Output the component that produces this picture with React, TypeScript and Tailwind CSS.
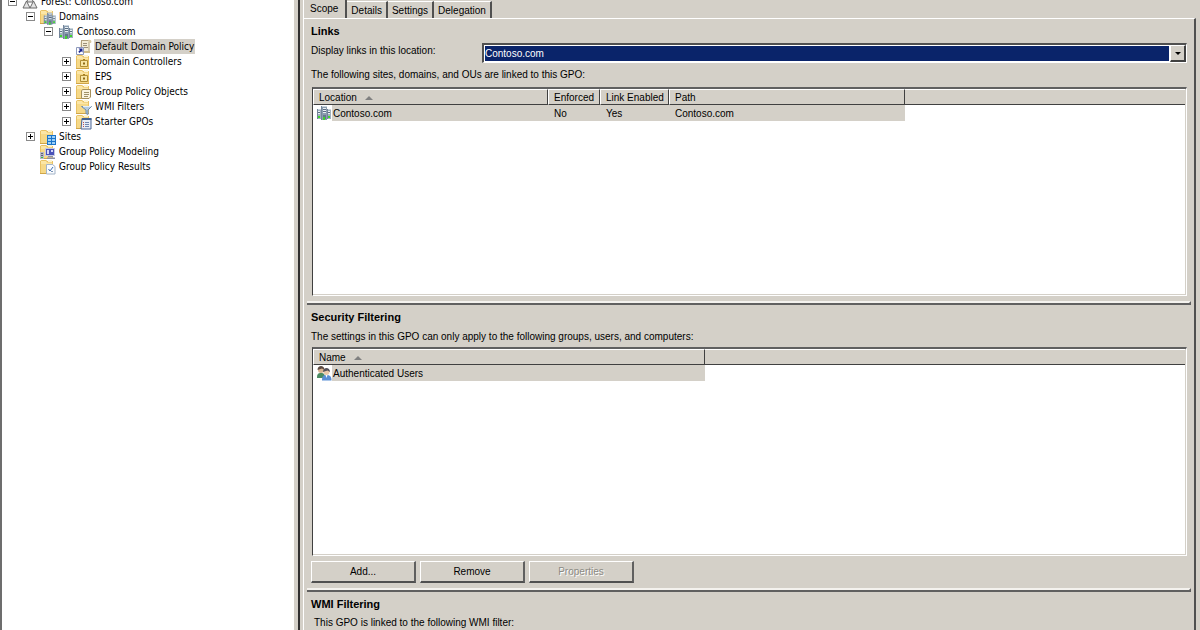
import { useState } from "react";
import type { ReactNode } from "react";
import clsx from "clsx";

type IconName =
  | "forest"
  | "domains"
  | "domain"
  | "link"
  | "ou"
  | "objects"
  | "wmi"
  | "starter"
  | "sites"
  | "modeling"
  | "results";

type Node = {
  label: string;
  icon: IconName;
  level: number;
  toggle?: "open" | "closed";
};

const nodes: Node[] = [
  { label: "Forest: Contoso.com", icon: "forest", level: 0, toggle: "open" },
  { label: "Domains", icon: "domains", level: 1, toggle: "open" },
  { label: "Contoso.com", icon: "domain", level: 2, toggle: "open" },
  { label: "Default Domain Policy", icon: "link", level: 3 },
  { label: "Domain Controllers", icon: "ou", level: 3, toggle: "closed" },
  { label: "EPS", icon: "ou", level: 3, toggle: "closed" },
  { label: "Group Policy Objects", icon: "objects", level: 3, toggle: "closed" },
  { label: "WMI Filters", icon: "wmi", level: 3, toggle: "closed" },
  { label: "Starter GPOs", icon: "starter", level: 3, toggle: "closed" },
  { label: "Sites", icon: "sites", level: 1, toggle: "closed" },
  { label: "Group Policy Modeling", icon: "modeling", level: 1 },
  { label: "Group Policy Results", icon: "results", level: 1 },
];

const indents = ["pl-[6px]", "pl-[24px]", "pl-[42px]", "pl-[60px]"];

const tabs = ["Scope", "Details", "Settings", "Delegation"];

// three server towers with a green light at the foot of each
function Towers() {
  return (
    <g>
      <path d="M5 1h6v14H5z" fill="#8b9db0" />
      <path d="M1 4h4v10H1zM11 4h4v10h-4z" fill="#9fb0be" />
      <path d="M5 1h1v14H5zM1 4h1v10H1zM11 4h1v10h-1z" fill="#74859a" />
      <path d="M6 1h5v1H6zM2 4h3v1H2zM12 4h3v1h-3z" fill="#c9d5de" />
      <path d="M7 3h3v1H7zM7 5h3v1H7zM7 7h3v1H7zM2 6h2v1H2zM2 8h2v1H2zM12 6h2v1h-2zM12 8h2v1h-2z" fill="#e9f0f4" />
      <path d="M7 4h3v1H7zM7 6h3v1H7zM2 7h2v1H2zM12 7h2v1h-2z" fill="#5a6d83" />
      <path d="M7 10h3v4H7z" fill="#64788c" />
      <path d="M2 11h2v2H2zM7 12h2v3H7zM12 11h2v2h-2z" fill="#3fd62c" />
    </g>
  );
}

function Folder() {
  return (
    <g>
      <path d="M0 2 1.500 1H6l1.500 1H13v13H0z" fill="#e9c264" />
      <path d="M1 2h5l1 1.500h5V14H1z" fill="#fbe6a6" />
      <path d="M1 5h11v9H1z" fill="#f6d988" />
      <path d="M0 14h13v1H0z" fill="#cfa548" />
      <path d="M8 1h4v2H8z" fill="#fdf3cf" />
    </g>
  );
}

const icons: Record<IconName, ReactNode> = {
  forest: (
    <g fill="#e4e4e4" stroke="#6b6b6b">
      <path d="M8 1.500 11.500 8h-7z" />
      <path d="M4.500 7 8 14H1zM11.500 7 15 14H8z" />
    </g>
  ),
  domains: (
    <g>
      <Folder />
      <g transform="translate(3 3) scale(.85)">
        <Towers />
      </g>
    </g>
  ),
  domain: <Towers />,
  link: (
    <g>
      <path d="M5 2h8.500v10.500L12 14H4V4z" fill="#f4ecd6" />
      <path d="M5 1h8.500v1H5zM5 2h1v11H5zM12.500 3h1v9h-1z" fill="#b09f7c" />
      <path d="M12 1c3-1 4 1 3 3h-2z" fill="#d8c9a2" />
      <path d="M7 4h4v1H7zM7 6h4v1H7zM8 8h4v1H8z" fill="#9c9079" />
      <path d="M8 12h6v2H8z" fill="#cdbb8c" />
      <path d="M.5 8.500h7v7h-7z" fill="#fff" stroke="#8d99bb" />
      <path d="M2.500 9.500h4v4l-1.300-1.300L3.500 14l-1.200-1.200L4 11z" fill="#18238e" />
    </g>
  ),
  ou: (
    <g>
      <Folder />
      <path d="M4.500 6.500h7v6h-7z" fill="#f9e7a6" stroke="#b08d34" />
      <path d="M7 8.500h2v2H7z" fill="#8f6b17" />
      <path d="M7 5h2v1H7z" fill="#a67f20" />
    </g>
  ),
  objects: (
    <g>
      <Folder />
      <path d="M6.500 5.500h8V13L13 14.500H5.500V7z" fill="#faf4e0" stroke="#a5905c" />
      <path d="M8 8h5v1H8zM8 10h5v1H8zM8 12h4v1H8z" fill="#a09168" />
    </g>
  ),
  wmi: (
    <g>
      <Folder />
      <path d="M5.500 7.500h10L12 11v4.500l-2-1V11z" fill="#b4cbe0" stroke="#6f8eae" />
      <path d="M7 7h8v1H7z" fill="#e2eef8" />
    </g>
  ),
  starter: (
    <g>
      <Folder />
      <path d="M6 4.500h9v10.500H5z" fill="#e7edf6" stroke="#4c6796" />
      <path d="M6 4h9.500v2H6z" fill="#44628f" />
      <path d="M7 8h1v1H7zM7 10h1v1H7zM7 12h1v1H7z" fill="#c65145" />
      <path d="M9 8h4v1H9zM9 10h4v1H9zM9 12h4v1H9z" fill="#6f88b1" />
    </g>
  ),
  sites: (
    <g>
      <Folder />
      <path d="M7 6h9v10H7z" fill="#1b74c9" />
      <path d="M8 7h3v2H8zM12 7h3v2h-3zM8 10h3v2H8zM12 10h3v2h-3zM8 13h3v2H8zM12 13h3v2h-3z" fill="#9dd0f6" />
    </g>
  ),
  modeling: (
    <g>
      <Folder />
      <path d="M5 4h10v8H5z" fill="#c7cbe2" />
      <path d="M6 5h8v6H6z" fill="#4a52b8" />
      <path d="M7 6h2v4H7zM11 6h2v2h-2z" fill="#d4d7f8" />
      <path d="M8 12h5v1H8zM7 13.500h8V15H7z" fill="#8d90a6" />
      <path d="M0 8h4v7H0z" fill="#b5b8c8" />
      <path d="M1 9h2v1H1zM1 11h2v1H1z" fill="#5f6378" />
      <path d="M1 13h2v1H1z" fill="#3cba38" />
    </g>
  ),
  results: (
    <g>
      <Folder />
      <path d="M6.500 5.500h6l2.500 2v7.500H6.500z" fill="#fafcff" stroke="#a3b4c8" />
      <path d="m8.500 10 1.500 2 3-4" fill="none" stroke="#3c6fb2" />
      <path d="M11 12h2v1h-2z" fill="#7a94b6" />
    </g>
  ),
};

function Icon({ name }: { name: IconName }) {
  return (
    <svg className="size-4 shrink-0" viewBox="0 0 16 16" aria-hidden="true">
      {icons[name]}
    </svg>
  );
}

function Toggle({ state }: { state: "open" | "closed" }) {
  return (
    <svg className="size-[9px]" viewBox="0 0 9 9" aria-hidden="true" shapeRendering="crispEdges">
      <path d="M0 0h9v9H0z" fill="#8a8a8a" />
      <path d="M1 1h7v7H1z" fill="#fff" />
      <path d="M2 4h5v1H2z" fill="#000" />
      {state === "closed" && <path d="M4 2h1v5H4z" fill="#000" />}
    </svg>
  );
}

function Tree() {
  const [selected, setSelected] = useState("Default Domain Policy");

  return (
    <nav className="w-[294px] shrink-0 overflow-hidden border-l-2 border-[#6d6d6d] bg-white font-['DejaVu_Sans_Condensed',sans-serif] text-[10px]">
      {/* scrolled down a little, so the forest row is partly out of view */}
      <ul className="-mt-[6px]">
        {nodes.map((node) => (
          <li key={node.label} className={clsx("flex h-[15px] items-center", indents[node.level])}>
            <span className="w-[14px] shrink-0">
              {node.toggle && (
                <button className="block" aria-label={node.label}>
                  <Toggle state={node.toggle} />
                </button>
              )}
            </span>
            <Icon name={node.icon} />
            <button
              onClick={() => setSelected(node.label)}
              className={clsx(
                "ml-[2px] px-px leading-[15px] whitespace-nowrap",
                selected === node.label && "bg-[#d4d0c8]"
              )}
            >
              {node.label}
            </button>
          </li>
        ))}
      </ul>
    </nav>
  );
}

function SortArrow() {
  return (
    <svg className="ml-2 inline-block h-1 w-2" viewBox="0 0 8 4" aria-hidden="true">
      <path d="M4 0 8 4H0z" fill="#808080" />
    </svg>
  );
}

function Head({ children }: { children?: ReactNode }) {
  return (
    <th
      className={clsx(
        "h-4 border-t border-b border-t-white border-b-[#404040] p-0 pt-px pl-[5px] text-left leading-[13px] font-normal whitespace-nowrap",
        children && "border-r border-l border-r-[#404040] border-l-white"
      )}
    >
      {children}
    </th>
  );
}

// first column of a row: the highlight starts after the icon
function IconCell({ icon, children }: { icon: ReactNode; children: ReactNode }) {
  return (
    <td className="p-0">
      <div className="flex h-4 items-center">
        <span className="flex w-[19px] shrink-0 pl-[3px]">{icon}</span>
        <span className="h-4 grow bg-[#d4d0c8] pt-px pl-px leading-[15px]">{children}</span>
      </div>
    </td>
  );
}

function Cell({ children }: { children: ReactNode }) {
  return <td className="bg-[#d4d0c8] p-0 pt-px pl-[6px]">{children}</td>;
}

// sunken list box shared by the links and the security lists
function ListBox({ children }: { children: ReactNode }) {
  return (
    <div className="mr-1 ml-[5px] h-[209px] border-t-2 border-r border-b border-l border-t-[#606060] border-r-white border-b-white border-l-[#404040] bg-white">
      <div className="h-full border-r border-b border-[#d4d0c8]">
        <table className="w-full table-fixed border-separate border-spacing-0 leading-[14px]">{children}</table>
      </div>
    </div>
  );
}

function UsersIcon() {
  return (
    <svg className="size-4 shrink-0" viewBox="0 0 16 16" aria-hidden="true">
      <path d="M1 13c0-4 1-5 4-5s4 1 4 5z" fill="#4b8b62" />
      <circle cx="5" cy="5" r="3" fill="#d9b391" />
      <path d="M1.500 5c0-5.500 7-5.500 7 0L6 3.500z" fill="#5b4a42" />
      <path d="M6 15.500c0-4 1-5.500 4.500-5.500s5 1.500 5 5.500z" fill="#5b8fd6" />
      <circle cx="10.500" cy="7" r="3" fill="#ecc9ab" />
      <path d="M7 7c0-5.500 7-5.500 7 0l-2.500-1.500z" fill="#54525c" />
      <path d="m9.500 10 1 3 1-3z" fill="#fff" />
    </svg>
  );
}

function Divider() {
  return (
    <hr className="h-[4px] border-0 border-t-2 border-r-2 border-b-2 border-t-[#f4f2ee] border-r-[#606060] border-b-[#606060]" />
  );
}

function Title({ children }: { children: ReactNode }) {
  return <h2 className="ml-1 text-[11px] leading-4 font-bold">{children}</h2>;
}

function PushButton({ children, disabled }: { children: ReactNode; disabled?: boolean }) {
  return (
    <button
      disabled={disabled}
      className="h-[22px] w-[105px] border-t border-r-2 border-b-2 border-l border-t-white border-r-[#606060] border-b-[#505050] border-l-white disabled:text-[#8c8a84] disabled:[text-shadow:1px_1px_0_#fff]"
    >
      {children}
    </button>
  );
}

export default function App() {
  const [tab, setTab] = useState("Scope");

  return (
    <div className="flex h-screen overflow-hidden bg-[#d4d0c8] text-black">
      <Tree />
      <div className="mr-[3px] ml-[4px] w-[2px] shrink-0 bg-[#303030]" />

      <main className="mr-1 flex min-w-0 grow flex-col font-['Liberation_Sans',Arial,sans-serif] text-[10px]">
        <div role="tablist" className="flex h-[18px] items-end">
          {tabs.map((name) => (
            <button
              key={name}
              role="tab"
              aria-selected={tab === name}
              onClick={() => setTab(name)}
              className={clsx(
                "border-r-2 border-r-[#505050] text-[10px]",
                tab === name
                  ? "-mb-px h-[19px] border-l border-l-white bg-[#d4d0c8] pr-[7px] pb-[2px] pl-[6px]"
                  : "h-[17px] border-t border-t-white px-[4px]"
              )}
            >
              {name}
            </button>
          ))}
        </div>

        <div className="grow border-t border-r-2 border-l border-t-white border-r-[#505050] border-l-white pr-[3px] pl-[3px]">
          <section className="pt-1">
            <Title>Links</Title>
            <div className="ml-1 flex items-start pt-1">
              <label htmlFor="location" className="w-[171px] shrink-0 leading-[15px]">
                Display links in this location:
              </label>
              <div className="relative mr-1 h-5 grow border-t-2 border-r border-b border-l-2 border-t-[#505050] border-r-white border-b-white border-l-[#505050] bg-white p-px">
                <select
                  id="location"
                  className="block h-[15px] w-[calc(100%-16px)] appearance-none bg-[#0a246a] leading-[15px] text-white outline-none"
                >
                  <option>Contoso.com</option>
                </select>
                <span className="pointer-events-none absolute top-0 right-0 flex h-[17px] w-4 items-center justify-center border-t border-r-2 border-b-2 border-l border-t-white border-r-[#404040] border-b-[#404040] border-l-white bg-[#d4d0c8]">
                  <svg className="h-[3px] w-[6px]" viewBox="0 0 6 3" aria-hidden="true">
                    <path d="M0 0h6L3 3z" fill="#000" />
                  </svg>
                </span>
              </div>
            </div>
            <p className="ml-1 py-1 leading-4">
              The following sites, domains, and OUs are linked to this GPO:
            </p>
            <ListBox>
              <colgroup>
                <col className="w-[235px]" />
                <col className="w-[52px]" />
                <col className="w-[69px]" />
                <col className="w-[236px]" />
                <col />
              </colgroup>
              <thead className="bg-[#d4d0c8]">
                <tr>
                  <Head>
                    Location
                    <SortArrow />
                  </Head>
                  <Head>Enforced</Head>
                  <Head>Link Enabled</Head>
                  <Head>Path</Head>
                  <Head />
                </tr>
              </thead>
              <tbody>
                <tr>
                  <IconCell icon={<Icon name="domain" />}>Contoso.com</IconCell>
                  <Cell>No</Cell>
                  <Cell>Yes</Cell>
                  <Cell>Contoso.com</Cell>
                  <td />
                </tr>
              </tbody>
            </ListBox>
          </section>

          <section className="pt-[5px]">
            <Divider />
            <div className="pt-1">
              <Title>Security Filtering</Title>
            </div>
            <p className="ml-1 pt-1 pb-[2px] leading-4">
              The settings in this GPO can only apply to the following groups, users, and computers:
            </p>
            <ListBox>
              <colgroup>
                <col className="w-[392px]" />
                <col />
              </colgroup>
              <thead className="bg-[#d4d0c8]">
                <tr>
                  <Head>
                    Name
                    <SortArrow />
                  </Head>
                  <Head />
                </tr>
              </thead>
              <tbody>
                <tr>
                  <IconCell icon={<UsersIcon />}>Authenticated Users</IconCell>
                  <td />
                </tr>
              </tbody>
            </ListBox>
            <div className="ml-1 flex gap-1 pt-[5px] pb-[5px]">
              <PushButton>Add...</PushButton>
              <PushButton>Remove</PushButton>
              <PushButton disabled>Properties</PushButton>
            </div>
          </section>

          <section>
            <Divider />
            <div className="pt-1">
              <Title>WMI Filtering</Title>
            </div>
            <p className="ml-[7px] pt-[3px] leading-4">This GPO is linked to the following WMI filter:</p>
          </section>
        </div>
      </main>
    </div>
  );
}
